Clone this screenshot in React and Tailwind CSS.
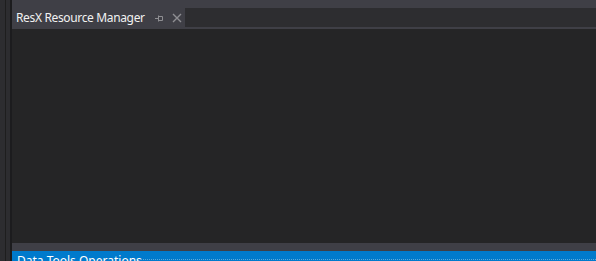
export default function App() {
  return (
    <div className="w-[596px] h-[261px] flex bg-[#2d2d30] overflow-hidden" style={{ fontFamily: '"Noto Sans", "Open Sans", sans-serif' }}>
      <div className="w-[12px] flex shrink-0">
        <div className="w-[5px] bg-[#2d2d30]" />
        <div className="w-[1px] bg-[#1e1e1e]" />
        <div className="w-[4px] bg-[#2d2d30]" />
        <div className="w-[2px] bg-[#1c1c1e]" />
      </div>
      <div className="flex-1 flex flex-col">
        <div className="h-[8px] bg-[#3f3f46]" />
        <div className="h-[19px] flex bg-[#2d2d30]">
          <div className="w-[173px] bg-[#3f3f46] flex items-center pl-[4px] pt-[1px]">
            <span className="text-[12px] text-[#f1f1f1] leading-none tracking-[-0.35px]">ResX Resource Manager</span>
            <svg className="ml-[9px]" width="10" height="10" viewBox="0 0 10 10">
              <path d="M1 5.5H4.5M4.5 2.5V8.5M4.5 3.5H8.5V7.5H4.5" stroke="#8e8e92" strokeWidth="1" fill="none" />
            </svg>
            <svg className="ml-[8px]" width="10" height="10" viewBox="0 0 10 10">
              <path d="M1 1L9 9M9 1L1 9" stroke="#8e8e92" strokeWidth="1.4" fill="none" />
            </svg>
          </div>
        </div>
        <div className="h-[2px] bg-[#3f3f46]" />
        <div className="flex-1 bg-[#252526]" />
        <div className="h-[8px] bg-[#3f3f46]" />
        <div className="h-[10px] bg-[#007acc] relative overflow-hidden">
          <span className="absolute left-[5px] top-[4px] text-[12px] text-white leading-none">Data Tools Operations</span>
          <div className="absolute left-[128px] right-0 bottom-[1px] h-[1px] border-b border-dotted border-[#59a8dc]" />
        </div>
      </div>
    </div>
  );
}
